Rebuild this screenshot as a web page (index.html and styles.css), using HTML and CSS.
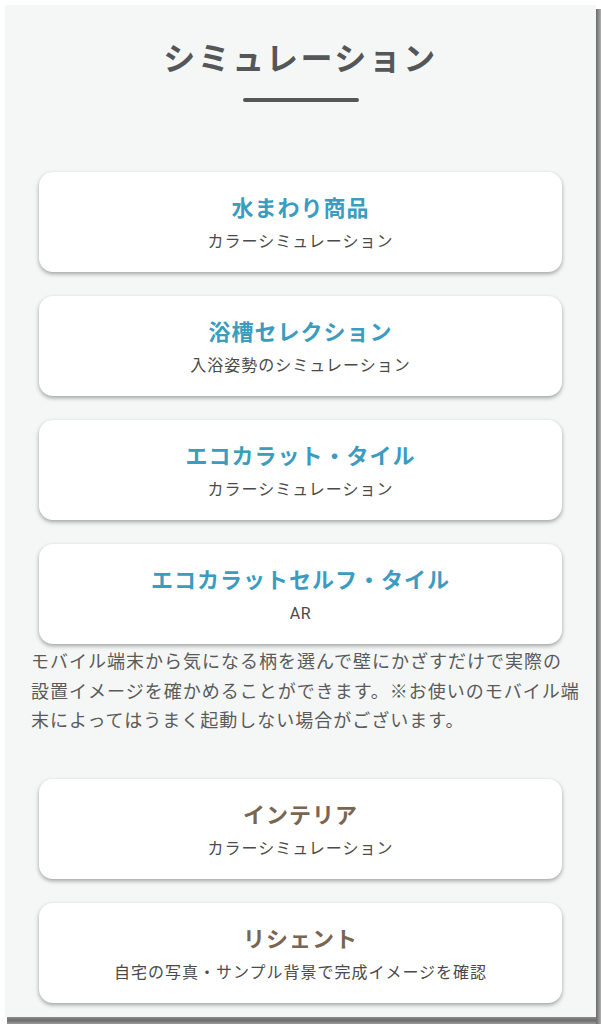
FILE: index.html
```html
<!DOCTYPE html>
<html lang="ja">
<head>
<meta charset="utf-8">
<title>シミュレーション</title>
<link rel="stylesheet" href="styles.css">
</head>
<body>
<div class="frame">
<main class="page">
  <h1 class="heading">シミュレーション</h1>
  <div class="heading-bar"></div>

  <div class="card-list">
    <a class="card" href="#">
      <span class="card-title">水まわり商品</span>
      <span class="card-sub">カラーシミュレーション</span>
    </a>
    <a class="card" href="#">
      <span class="card-title">浴槽セレクション</span>
      <span class="card-sub">入浴姿勢のシミュレーション</span>
    </a>
    <a class="card" href="#">
      <span class="card-title">エコカラット・タイル</span>
      <span class="card-sub">カラーシミュレーション</span>
    </a>
    <a class="card" href="#">
      <span class="card-title">エコカラットセルフ・タイル</span>
      <span class="card-sub card-sub-latin">AR</span>
    </a>
  </div>

  <p class="note">モバイル端末から気になる柄を選んで壁にかざすだけで実際の<br>設置イメージを確かめることができます。※お使いのモバイル端<br>末によってはうまく起動しない場合がございます。</p>

  <div class="card-list card-list-brown">
    <a class="card" href="#">
      <span class="card-title card-title-brown">インテリア</span>
      <span class="card-sub">カラーシミュレーション</span>
    </a>
    <a class="card" href="#">
      <span class="card-title card-title-brown">リシェント</span>
      <span class="card-sub">自宅の写真・サンプル背景で完成イメージを確認</span>
    </a>
  </div>
</main>
</div>
</body>
</html>
```

FILE: styles.css
```css
* {
  box-sizing: border-box;
}

html, body {
  background: #ffffff;
}

body {
  margin: 0;
  font-family: "Noto Sans CJK JP", "Noto Sans", sans-serif;
}

/* outer frame: white top/left edge, dark shadow strip right/bottom */
.frame {
  width: 601px;
  height: 1024px;
  padding: 5px 0 0 5px;
  background:
    linear-gradient(to right, #6a6a6a, #8a8a8a 50%, #b0b0b0) right 0 top 9px / 5px 100% no-repeat,
    linear-gradient(to bottom, #8d8d8d, #6c6c6c 45%, #9a9a9a) left 7px bottom 0 / 100% 7px no-repeat,
    #ffffff;
}

.page {
  width: 591px;
  height: 1012px;
  background: #f5f7f6;
  padding: 27px 24px 0;
  display: flex;
  flex-direction: column;
  align-items: stretch;
}

.heading {
  margin: 0;
  font-size: 32px;
  line-height: 48px;
  font-weight: 700;
  letter-spacing: 2.5px;
  color: #54575a;
  text-align: center;
}

.heading-bar {
  align-self: center;
  width: 116px;
  height: 4px;
  border-radius: 2px;
  background: #54575a;
  margin-top: 18px;
}

.card-list {
  display: flex;
  flex-direction: column;
  gap: 24px;
  padding: 0 10px;
  margin-top: 70px;
}

.card-list-brown {
  margin-top: 44px;
}

.card {
  display: flex;
  flex-direction: column;
  align-items: center;
  height: 100px;
  padding-top: 18px;
  background: #ffffff;
  border-radius: 14px;
  box-shadow: 0 2px 4px rgba(0, 0, 0, 0.35);
  text-decoration: none;
}

.card-title {
  font-size: 22px;
  line-height: 33px;
  font-weight: 700;
  letter-spacing: 1px;
  color: #3a9cbf;
}

.card-title-brown {
  color: #7a6552;
}

.card-sub {
  margin-top: 5px;
  font-size: 16px;
  line-height: 24px;
  letter-spacing: 1px;
  color: #4a4a4a;
}

.card-sub-latin {
  margin-top: 7px;
  font-family: "Roboto", "Noto Sans CJK JP", sans-serif;
  letter-spacing: 0.5px;
}

.note {
  margin: 2px 0 0 2px;
  font-size: 18px;
  line-height: 29.5px;
  letter-spacing: 1px;
  color: #5a5a5a;
  white-space: nowrap;
}
```
